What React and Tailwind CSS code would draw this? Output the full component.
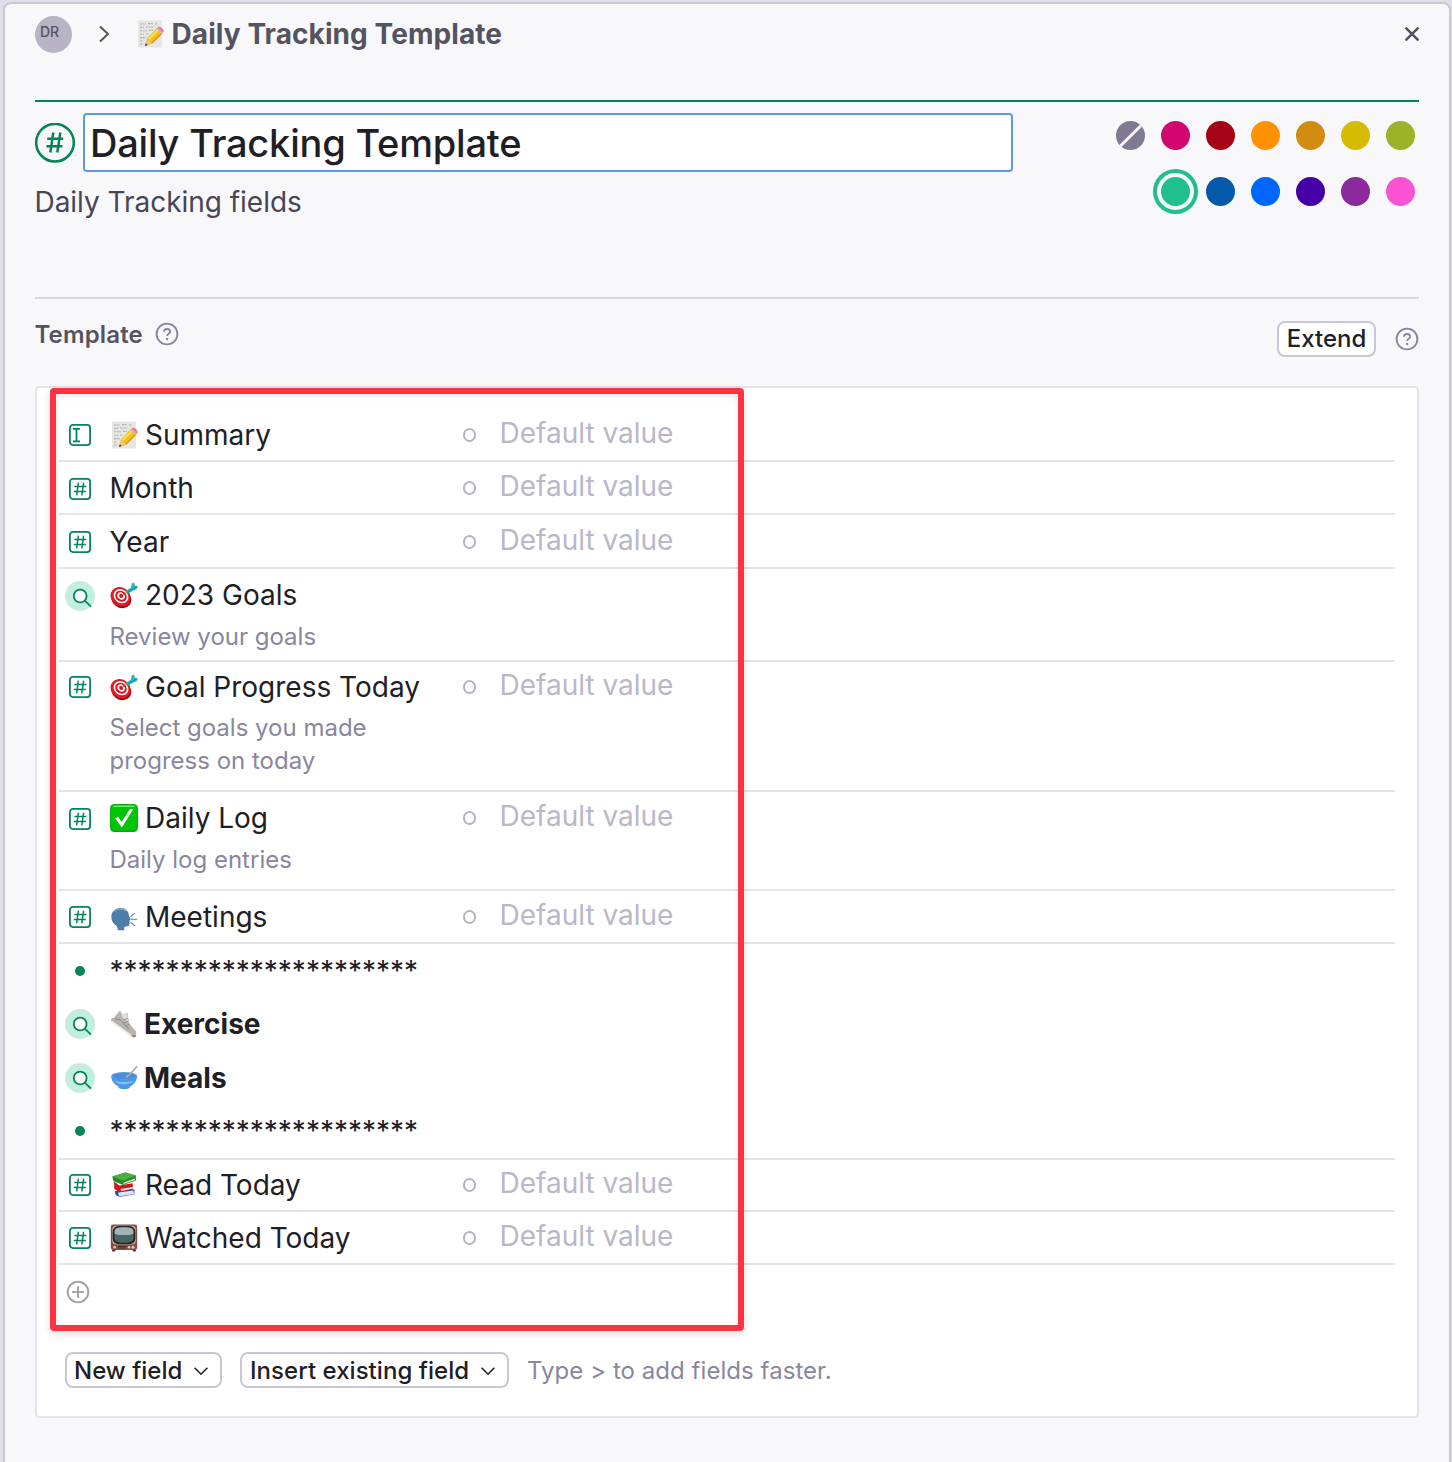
import { clsx } from "clsx";

const topColors = ["bg-[#d1066f]", "bg-[#a50416]", "bg-[#ff9202]", "bg-[#d28c10]", "bg-[#d6bb04]", "bg-[#9cb227]"];
const bottomColors = ["bg-[#0459a9]", "bg-[#0066ff]", "bg-[#4400a6]", "bg-[#8b2a9c]", "bg-[#f953d3]"];

const stars = "**********************";

const rows = [
  { icon: "text", emoji: "memo", label: "Summary", value: true, size: "h-[53px] pt-[9px]", line: true },
  { icon: "hash", label: "Month", iconGap: "mt-px", value: true, size: "h-[53px] pt-[9px]", line: true },
  { icon: "hash", label: "Year", value: true, size: "h-[54px] pt-[10px]", line: true },
  { icon: "search", emoji: "target", label: "2023 Goals", note: "Review your goals", iconGap: "mt-px", size: "h-[93px] pt-[9px]", line: true },
  { icon: "hash", emoji: "target", label: "Goal Progress Today", note: "Select goals you made progress on today", noteGap: "mt-[7px]", value: true, size: "h-[130px] pt-[8px]", line: true },
  { icon: "hash", emoji: "check", label: "Daily Log", note: "Daily log entries", iconGap: "mt-px", value: true, size: "h-[99px] pt-[9px]", line: true },
  { icon: "hash", emoji: "speak", label: "Meetings", value: true, size: "h-[53px] pt-[9px]", line: true },
  { icon: "bullet", label: stars, size: "h-[54px] pt-[10px]" },
  { icon: "search", emoji: "shoe", label: "Exercise", bold: true, size: "h-[53px] pt-[9px]" },
  { icon: "search", emoji: "bowl", label: "Meals", bold: true, size: "h-[54px] pt-[10px]" },
  { icon: "bullet", label: stars, size: "h-[55px] pt-[9px]", line: true },
  { icon: "hash", emoji: "books", label: "Read Today", value: true, size: "h-[52px] pt-[8px]", line: true },
  { icon: "hash", emoji: "tv", label: "Watched Today", value: true, size: "h-[53px] pt-[9px]", line: true },
];

function Emoji({ name, className }) {
  return (
    <svg viewBox="0 0 28 28" className={clsx("w-7 h-7 shrink-0", className)}>
      {name === "memo" && (
        <>
          <rect x="2" y="0.5" width="24" height="27" fill="#e6e6e5" />
          <path d="M4 4h6M12 3.6h5M19 4h3M4 7.4h4M10 7h7M4 10.8h7M13 10.4h4M4 14.2h4M10 14h3M4 17.6h6M4 21h3M4 24h3" stroke="#b0b0b0" strokeWidth="1.1" strokeDasharray="2 .6" />
          <path d="M9 26l2-7.5L21 8l5.500 5.400L15.500 24z" fill="#f9bf17" />
          <path d="M12.8 19.4L22 9.900" stroke="#ffe066" strokeWidth="1.6" />
          <path d="M15.4 23.600l10-10" stroke="#d68a08" strokeWidth="1.2" />
          <path d="M11 18.800l4.900 4.900-7 2.400z" fill="#e8c58f" />
          <path d="M9.900 23.300l1.800 1.700-2.900 1.100z" fill="#333" />
          <path d="M20.200 8.900l1.300-1.300 5.300 5.200-1.300 1.300z" fill="#b9bdc1" />
          <path d="M21.500 7.600l.8-.6c2.200-1.200 6.200 2.800 5.200 4.900l-.7.9z" fill="#f0788a" />
        </>
      )}
      {name === "target" && (
        <>
          <ellipse cx="11.2" cy="17.500" rx="10.600" ry="9.200" transform="rotate(38 11.2 17.5)" fill="#9c0710" />
          <ellipse cx="10.600" cy="15.8" rx="10.500" ry="9.200" transform="rotate(38 10.6 15.8)" fill="#e01a20" />
          <ellipse cx="11" cy="15.2" rx="7.800" ry="6.700" transform="rotate(38 11 15.2)" fill="#fff" />
          <ellipse cx="11" cy="15.2" rx="6.100" ry="5.200" transform="rotate(38 11 15.2)" fill="#d8161d" />
          <ellipse cx="11.1" cy="15" rx="4" ry="3.3" transform="rotate(38 11.1 15)" fill="#fff" />
          <ellipse cx="11.2" cy="14.9" rx="2.2" ry="1.9" transform="rotate(38 11.2 14.9)" fill="#d8161d" />
          <path d="M11.5 15l5-3.4" stroke="#555" strokeWidth="1" />
          <path d="M14.4 12.8l2.6-2.4.8 1.6z" fill="#e8b21a" />
          <path d="M15.900 9.800l5-3L21.800 2.400l2.200-1 1 3.300 3 .8-1.500 2.700-4.300 1.700-5 3.300z" fill="#25b5c0" />
          <path d="M17 11.7l10-6" stroke="#0f7f91" strokeWidth=".8" />
        </>
      )}
      {name === "check" && (
        <>
          <rect x="0" y="0" width="28" height="28" rx="4.6" fill="#08a60c" />
          <rect x="0.8" y="1" width="26.4" height="25.6" rx="4" fill="#02c505" />
          <path d="M4 2.2h20" stroke="#72e673" strokeWidth="1.4" strokeLinecap="round" />
          <path d="M5.2 14.2l3-1.4 3.2 5.2L20 5.2h3.2L11.8 23.4z" fill="#fff" />
        </>
      )}
      {name === "speak" && (
        <>
          <path d="M7.8 27.3c.1-2.5-.7-4-2.9-5.8-4.5-3.7-4.6-10.6-1-13.9 4-3.7 10.9-3.2 13.7.8 1.2 1.8 1 3.4 1.4 4.5l1.6 3.1c.3.7-.2 1-1 1.1.2 1 .3 1.6-.1 2.2.3.9.1 1.6-.3 2 .1 1.9-1.5 2.4-3.9 2.2-.8 0-1 .7-1 1.8v2z" fill="#4c7ea8" />
          <path d="M4 8.5C8 4.8 13.8 5.4 16 8" stroke="#78a8ca" strokeWidth="1.5" fill="none" />
          <path d="M20.8 16.4h6.3M20.5 13.4L25 10M20.5 19.4l4.7 3.5" stroke="#7199b9" strokeWidth="1.3" />
        </>
      )}
      {name === "shoe" && (
        <>
          <path d="M1.2 11.5L23 27.2c1.8.8 3.7-.4 3-2.2L3 10z" fill="#8f8b88" />
          <path d="M1 11.5c-.2-2.6.8-3.6 3-3.8L8.6 2 10 .8l3.2 3.8 4.4-1.8 1.3 10.5 6.6 7.5c1.3 1.8.8 3.8-.8 4.1-1.2.4-2.6 0-4-.9z" fill="#b9b3af" />
          <path d="M10.1 1.2l3 3.5 4.1-1.4 1 8.5-4.8-2.6z" fill="#e0ddda" />
          <path d="M1.2 11l20.5 14.5" stroke="#eee" strokeWidth="1.3" />
          <path d="M13 10l5-1.5M14 13l4.6-2M16 16l4-2.3M5 9l5 .8 9 9.5" stroke="#8f8a86" strokeWidth="1" fill="none" />
        </>
      )}
      {name === "bowl" && (
        <>
          <ellipse cx="14.2" cy="12" rx="13" ry="3.9" fill="#5b9fe4" />
          <ellipse cx="14.2" cy="12" rx="11.6" ry="2.9" fill="#4a8cd8" />
          <path d="M15 13.2c1-2.2 3-2.5 4.2-3.5L26 2.2c1-1 2 0 1.2 1.2L20 11.3c-1 1.5-3 2.5-5 1.9z" fill="#b3a4a2" />
          <path d="M1.2 12.3c3 3.8 22.6 4 26 0-.4 5.2-3.6 8.3-7.4 10.5v1c-1.2 1.8-10 1.8-11.2 0v-1C4.5 20.6 1.3 17.2 1.2 12.3z" fill="#4c98e5" />
          <path d="M4.5 16.4c4.5 2 15 2.2 19.5 0-3 4.8-16 5.4-19.5 0z" fill="#83c0f5" />
        </>
      )}
      {name === "books" && (
        <>
          <path d="M4.6 20.2l17-2.2 3 .8-.2 4.5-15 2.6-3.5-2z" fill="#2c4c9c" />
          <path d="M8 21.6l15.5-2.2.6 3.5-15 2.6z" fill="#dfe3ef" />
          <path d="M4.2 10.6l5 4 13.4-2.3.6 5.8-14 3.2-5-3.6z" fill="#d0161f" />
          <path d="M10.5 18l12.5-2 .3 1.5-12 2.4z" fill="#f0e8e8" />
          <path d="M2.3 5.5l13-4L25.8 4.6 26 9.5 13.2 14 3.5 10.2z" fill="#298c28" />
          <path d="M2.3 5.5l13-4 10.5 3.1-12.5 5z" fill="#4cae41" />
          <path d="M13.5 11.8l11.3-4.3.2 1.5-11.3 4z" fill="#ecefe8" />
        </>
      )}
      {name === "tv" && (
        <>
          <rect x="0.8" y="0.4" width="26.4" height="25.6" rx="2.4" fill="#885044" />
          <path d="M2.3 25.5l-.4 2h3l1-2zM25.7 25.5l.4 2h-3l-1-2z" fill="#5f382f" />
          <rect x="2.2" y="1.8" width="23.6" height="18.7" rx="4" fill="#c5a99c" />
          <rect x="2.6" y="2" width="22.8" height="18.2" rx="6" fill="#1f2a2c" />
          <path d="M4.5 8c0-3.8 2-4.8 9.5-4.8s9.5 1 9.5 4.8v2c-5 2-14 2-19 0z" fill="#9fb6b5" />
          <path d="M4.5 10c5 1.8 14 1.8 19 0v3.8c0 3.4-2 5-9.5 5s-9.5-1.6-9.5-5z" fill="#4d6466" />
          <path d="M8 22.5h8M8 24h8" stroke="#392721" strokeWidth=".8" />
          <circle cx="4.7" cy="23.2" r="1.3" fill="#e2c6b7" />
          <circle cx="19" cy="23.2" r="1.2" fill="#e2c6b7" />
          <circle cx="23" cy="23.2" r="1.5" fill="#e2c6b7" />
        </>
      )}
    </svg>
  );
}

function FieldIcon({ type }) {
  if (type === "bullet") return <span className="w-2.5 h-2.5 rounded-full bg-[#058455]" />;
  if (type === "search")
    return (
      <svg viewBox="0 0 30 30" className="w-[30px] h-[30px] shrink-0">
        <circle cx="15" cy="15" r="15" fill="#c2eedf" />
        <circle cx="15.2" cy="15" r="6.4" fill="#fff" stroke="#058455" strokeWidth="1.8" />
        <path d="M19.8 19.6l6.2 6" stroke="#058455" strokeWidth="1.8" />
      </svg>
    );
  return (
    <svg viewBox="0 0 24 24" className="w-6 h-6 shrink-0" fill="none" stroke="#058455">
      <rect x="1.9" y="1.9" width="20.2" height="20.2" rx="3" strokeWidth="1.8" />
      {type === "hash" ? (
        <path d="M10.4 5.7l-1.8 12.6M15.6 5.7l-1.8 12.6M6.4 9.5h12M5.8 14.4h12" strokeWidth="1.5" />
      ) : (
        <path d="M4.9 5.9h7.2M4.9 18.3h7.2M8.5 5.9v12.4" strokeWidth="1.8" />
      )}
    </svg>
  );
}

function HelpIcon() {
  return (
    <svg viewBox="0 0 24 24" className="w-6 h-6 shrink-0" fill="none" stroke="#89869e">
      <circle cx="12" cy="12" r="10.4" strokeWidth="1.9" />
      <path d="M8.9 9.7C9 8 10.2 7 12 7c1.9 0 3.2 1 3.2 2.7 0 2.1-3.1 2-3.1 4.3" strokeWidth="1.8" />
      <circle cx="12.1" cy="17" r="1.2" fill="#89869e" stroke="none" />
    </svg>
  );
}

function Chevron() {
  return (
    <svg viewBox="0 0 16 16" className="w-4 h-4" fill="none" stroke="#1f2026" strokeWidth="1.6">
      <path d="M1.6 4.8L8 11.2l6.4-6.4" />
    </svg>
  );
}

function Row({ row }) {
  return (
    <div className={clsx("flex items-start", row.size, row.line && "border-b-2 border-[#e5e4ea]")}>
      <div className={clsx("w-[42px] h-[34px] flex items-center justify-center shrink-0", row.iconGap)}>
        <FieldIcon type={row.icon} />
      </div>
      <div className="w-[362px] pl-[8.5px] shrink-0">
        <div className={clsx("flex items-center text-[28px] leading-[34px] whitespace-nowrap", row.bold && "font-bold")}>
          {row.emoji && <Emoji name={row.emoji} className={row.bold ? "ml-[0.5px] mr-[6px]" : "ml-[0.5px] mr-[7px]"} />}
          {row.label}
        </div>
        {row.note && (
          <p className={clsx("w-[290px] text-2xl leading-[33px] text-[#89869e]", row.noteGap || "mt-[8px]")}>{row.note}</p>
        )}
      </div>
      {row.value && (
        <div className="flex items-start">
          <span className="mt-[10px] w-[13px] h-[14px] rounded-full border-2 border-[#b6b4c4]" />
          <span className="-mt-[2px] ml-[23.5px] text-[28px] leading-[34px] text-[#b9b7c8]">Default value</span>
        </div>
      )}
    </div>
  );
}

export default function App() {
  return (
    <div className="w-[1452px] h-[1462px] pt-[2px] pl-[3px] pr-px overflow-hidden bg-[#e0dfe7] font-['Inter',sans-serif] text-[#1f2026]">
      <div className="h-[1480px] px-[30px] rounded-t-lg border-2 border-[#c9c7d5] bg-[#f8f8fb]">
        <header className="h-[96px] pt-[12px] flex items-start">
          <div className="w-[37px] h-[37px] rounded-full bg-[#b6b4c5] pl-[5px] pt-[7px] text-[14px] leading-[18px] font-medium text-[#55535f]">
            DR
          </div>
          <svg viewBox="0 0 12 18" className="w-3 h-[18px] mt-[9px] ml-[26px]" fill="none" stroke="#55535f" strokeWidth="2">
            <path d="M2 1.5l8 7.5-8 7.5" />
          </svg>
          <Emoji name="memo" className="mt-[4px] ml-[26px]" />
          <h1 className="ml-[7.5px] mt-px text-[28px] leading-[34px] tracking-[0.08px] font-bold text-[#55535f] whitespace-nowrap">
            Daily Tracking Template
          </h1>
          <svg viewBox="0 0 16 16" className="w-4 h-4 mt-[10px] mr-[-1px] ml-auto" fill="none" stroke="#55535f" strokeWidth="2.6" strokeLinecap="round">
            <path d="M2.3 2.3l11.4 11.4M13.7 2.3L2.3 13.7" />
          </svg>
        </header>

        <section className="h-[199px] flex border-t-2 border-[#058455] justify-between">
          <div className="pt-[11px]">
            <div className="flex items-center gap-2">
              <svg viewBox="0 0 40 40" className="w-10 h-10" fill="none" stroke="#058455">
                <circle cx="20" cy="19.7" r="18.8" strokeWidth="2.5" />
                <path d="M18.3 9.5l-3 20M25.3 9.5l-3 20M12.2 15.8h16M11.4 23.3h16" strokeWidth="2.5" />
              </svg>
              <div className="w-[930px] h-[59px] pl-[5px] rounded-[4px] border-2 border-[#5c9ae6] bg-white text-[38px] leading-[56px] tracking-[-0.2px] font-[450] whitespace-nowrap">
                Daily Tracking Template
              </div>
            </div>
            <p className="mt-[13px] -ml-[0.5px] text-[28px] leading-[34px] tracking-[-0.03px] text-[#484652]">Daily Tracking fields</p>
          </div>
          <div className="pt-[19px] pr-[4px] flex flex-col gap-[27px]">
            <div className="flex justify-end gap-4">
              <span className="w-[29px] h-[29px] rounded-full bg-[#7f7a92] overflow-hidden flex items-center justify-center">
                <span className="w-[32px] h-[3px] shrink-0 -rotate-45 bg-[#f8f8fb]" />
              </span>
              {topColors.map((color) => (
                <span key={color} className={clsx("w-[29px] h-[29px] rounded-full", color)} />
              ))}
            </div>
            <div className="flex justify-end gap-4">
              <span className="w-[29px] h-[29px] rounded-full bg-[#1fc08b] outline-4 outline-offset-4 outline-[#1fc08b]" />
              {bottomColors.map((color) => (
                <span key={color} className={clsx("w-[29px] h-[29px] rounded-full", color)} />
              ))}
            </div>
          </div>
        </section>

        <section className="-mt-[2px] border-t-2 border-[#d9d8e1]">
          <div className="h-[87px] flex items-start justify-between">
            <div className="pt-[20px] flex items-center gap-3">
              <h2 className="pt-px -mb-px -ml-[0.5px] text-2xl leading-[30px] tracking-[0.15px] font-semibold text-[#55535f]">Template</h2>
              <HelpIcon />
            </div>
            <div className="pt-[22px] pr-[0.5px] flex items-center">
              <button className="h-9 w-[99px] mr-[18.5px] rounded-lg border-2 border-[#c9c7d6] bg-white text-2xl leading-[32px] font-medium">Extend</button>
              <HelpIcon />
            </div>
          </div>

          <div className="relative h-[1032px] pt-[21px] px-[22px] rounded-[4px] border-2 border-[#e5e4ea] bg-white">
            {rows.map((row, i) => (
              <Row key={i} row={row} />
            ))}
            <svg viewBox="0 0 24 24" className="w-6 h-6 ml-[7.4px] mt-[15px]" fill="none" stroke="#a4a4a6" strokeWidth="2">
              <circle cx="12" cy="12" r="10.3" />
              <path d="M12 6.2v11.6M6.2 12h11.6" />
            </svg>
            <div className="mt-[48px] ml-[6px] flex items-start">
              <button className="w-[157px] h-9 pl-[7px] pt-px pr-[11px] flex items-center justify-between rounded-lg border-2 border-[#c9c7d6] text-2xl leading-8 font-medium whitespace-nowrap">
                New field
                <Chevron />
              </button>
              <button className="w-[269px] h-9 ml-[18px] pl-[8px] pt-px pr-[11px] flex items-center justify-between rounded-lg border-2 border-[#c9c7d6] text-2xl leading-8 font-medium tracking-[0.04px] whitespace-nowrap">
                Insert existing field
                <Chevron />
              </button>
              <p className="ml-[18px] pt-px text-2xl leading-9 tracking-[0.05px] text-[#89869e]">Type &gt; to add fields faster.</p>
            </div>
            {/* highlight frame over the field list */}
            <div className="absolute left-[13px] top-[0.4px] w-[694px] h-[943px] rounded-[4px] border-6 border-[#fa3443] shadow-[0_3px_8px_rgba(0,0,0,0.13),inset_0_2px_6px_rgba(0,0,0,0.1)]" />
          </div>
        </section>
      </div>
    </div>
  );
}
